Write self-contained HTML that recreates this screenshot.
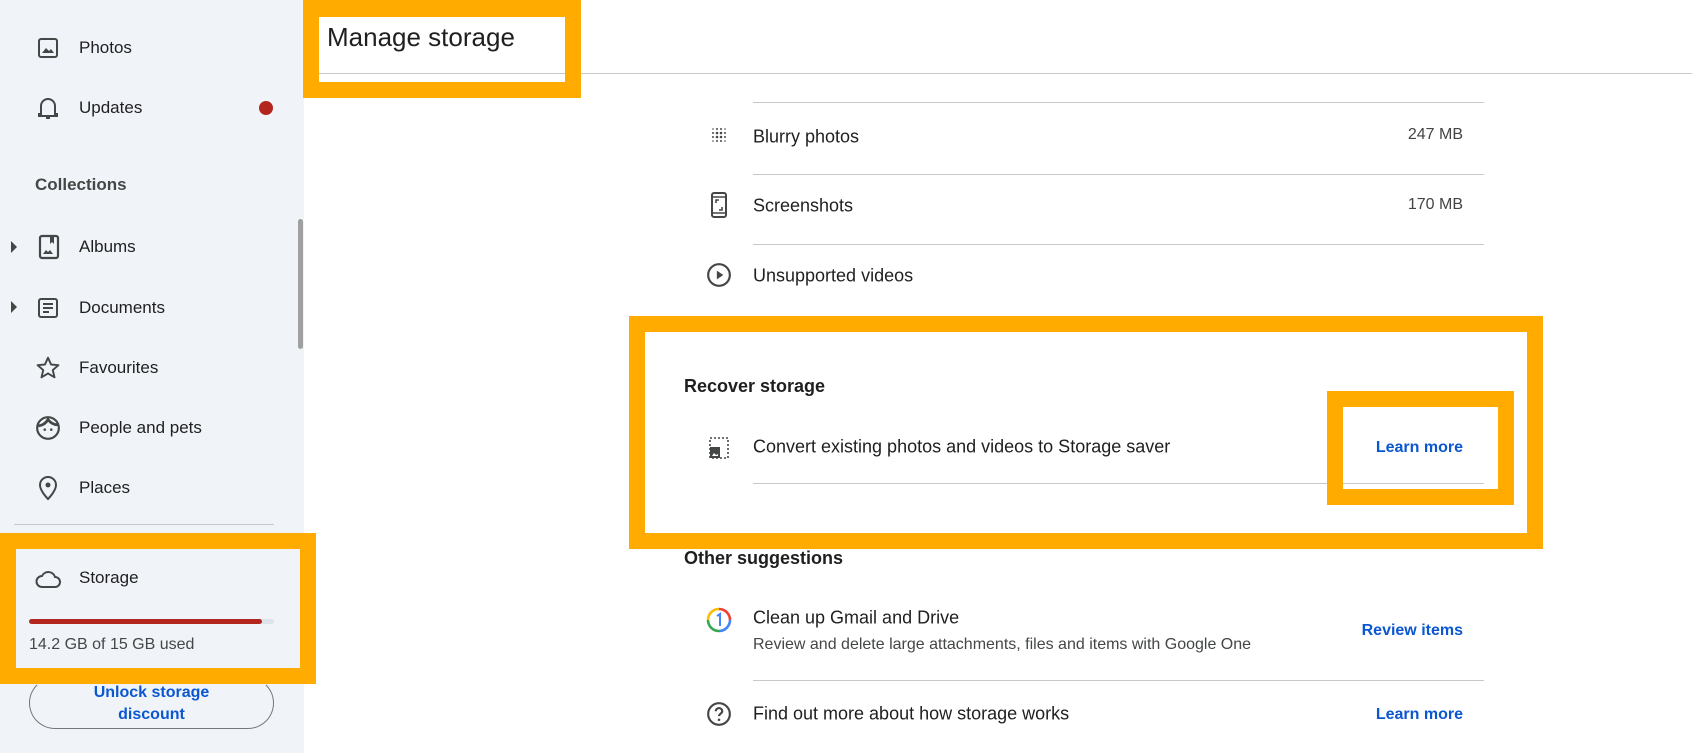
<!DOCTYPE html>
<html><head><meta charset="utf-8"><style>
*{margin:0;padding:0;box-sizing:border-box}
body{width:1692px;height:753px;overflow:hidden;background:#fff;font-family:"Liberation Sans",sans-serif;color:#1f1f1f;position:relative}
.a{position:absolute;white-space:nowrap}
.side{position:absolute;left:0;top:0;width:304px;height:753px;background:#f0f4f9}
.si{position:absolute;left:79px;font-size:17px;color:#1f1f1f;transform:translateY(-50%)}
.ic{position:absolute;transform:translate(-50%,-50%)}
.ob{position:absolute;border:16px solid #ffab00}
.line{position:absolute;height:1px;background:#c7c7c7}
.mt{position:absolute;left:753px;font-size:18px;transform:translateY(-50%)}
.rt{position:absolute;right:229px;font-size:16px;transform:translateY(-50%);color:#444}
.lk{position:absolute;right:229px;font-size:16px;font-weight:bold;color:#0b57d0;transform:translateY(-50%)}
</style></head><body>
<div class="side">
 <svg class="ic" style="left:48px;top:48px" width="24" height="24" viewBox="0 0 24 24"><rect x="3" y="3" width="18" height="18" rx="2" fill="none" stroke="#444746" stroke-width="2"/><path d="M6 17l4-5 3 3 2-2 3 4z" fill="#444746"/></svg>
 <div class="si" style="top:48px">Photos</div>
 <svg class="ic" style="left:48px;top:108px" width="24" height="26" viewBox="0 0 24 26"><path d="M5 19V11a7 7 0 0114 0v8h2v2H3v-2z" fill="none" stroke="#444746" stroke-width="2"/><path d="M10 23h4" stroke="#444746" stroke-width="2"/></svg>
 <div class="si" style="top:108px">Updates</div>
 <div class="a" style="left:259px;top:101px;width:14px;height:14px;border-radius:50%;background:#b3261e"></div>
 <div class="a" style="left:35px;top:175px;font-size:17px;font-weight:bold;color:#444746">Collections</div>
 <div class="a" style="left:11px;top:241px;border-left:6px solid #444746;border-top:6px solid transparent;border-bottom:6px solid transparent"></div>
 <svg class="ic" style="left:49px;top:247px" width="22" height="26" viewBox="0 0 22 26"><rect x="2" y="2" width="18" height="22" rx="2" fill="none" stroke="#444746" stroke-width="2.2"/><path d="M12 2v8l2-2 2 2V2z M5 20l3-4 2 2 2-2 3 4z" fill="#444746"/></svg>
 <div class="si" style="top:247px">Albums</div>
 <div class="a" style="left:11px;top:301px;border-left:6px solid #444746;border-top:6px solid transparent;border-bottom:6px solid transparent"></div>
 <svg class="ic" style="left:48px;top:308px" width="24" height="24" viewBox="0 0 24 24"><rect x="3" y="3" width="18" height="18" rx="2" fill="none" stroke="#444746" stroke-width="2"/><path d="M7 8h10M7 12h10M7 16h6" stroke="#444746" stroke-width="2"/></svg>
 <div class="si" style="top:308px">Documents</div>
 <svg class="ic" style="left:48px;top:368px" width="26" height="26" viewBox="0 0 24 24"><path d="M12 2.5l2.8 6.3 6.8.6-5.2 4.5 1.6 6.7L12 17l-6 3.6 1.6-6.7L2.4 9.4l6.8-.6z" fill="none" stroke="#444746" stroke-width="1.8" stroke-linejoin="round"/></svg>
 <div class="si" style="top:368px">Favourites</div>
 <svg class="ic" style="left:48px;top:428px" width="26" height="26" viewBox="0 0 24 24"><circle cx="12" cy="12" r="10" fill="none" stroke="#444746" stroke-width="2"/><path d="M3 10c3 0 7-2 9-6 2 3 5 5 9 5" fill="none" stroke="#444746" stroke-width="2.5"/><circle cx="9" cy="13.5" r="1.2" fill="#444746"/><circle cx="15" cy="13.5" r="1.2" fill="#444746"/></svg>
 <div class="si" style="top:428px">People and pets</div>
 <svg class="ic" style="left:48px;top:488px" width="22" height="26" viewBox="0 0 22 26"><path d="M11 24s-8-8-8-14a8 8 0 0116 0c0 6-8 14-8 14z" fill="none" stroke="#444746" stroke-width="2"/><circle cx="11" cy="10" r="2.5" fill="#444746"/></svg>
 <div class="si" style="top:488px">Places</div>
 <div class="line" style="left:14px;top:524px;width:260px;background:#c4c7c5"></div>
 <div class="a" style="left:298px;top:219px;width:5px;height:130px;border-radius:3px;background:#a0a0a0"></div>
</div>
<div class="ob" style="left:0;top:533px;width:316px;height:151px;background:#f0f4f9"></div>
<svg class="ic" style="left:48px;top:579px" width="26" height="20" viewBox="0 0 26 20"><path d="M7 18h13a5 5 0 000-10 7 7 0 00-13-1 5.5 5.5 0 000 11z" fill="none" stroke="#444746" stroke-width="2"/></svg>
<div class="si" style="top:578px">Storage</div>
<div class="a" style="left:29px;top:619px;width:245px;height:5px;border-radius:3px;background:#dde3ea"></div>
<div class="a" style="left:29px;top:619px;width:233px;height:5px;border-radius:3px;background:#b3261e"></div>
<div class="a" style="left:29px;top:636px;font-size:16px;color:#444746">14.2 GB of 15 GB used</div>
<div class="a" style="left:29px;top:677px;width:245px;height:52px;border:1px solid #747775;border-top-color:transparent;border-radius:26px;text-align:center;color:#0b57d0;font-size:16px;font-weight:bold;line-height:22px;padding-top:4px">Unlock storage<br>discount</div>

<div class="line" style="left:304px;top:73px;width:1388px"></div>
<div class="ob" style="left:303px;top:0;width:278px;height:98px;border-top-width:17px"></div>
<div class="a" style="left:327px;top:22px;font-size:26px;color:#1f1f1f">Manage storage</div>

<div class="line" style="left:753px;top:102px;width:731px"></div>
<svg class="ic" style="left:719px;top:135px" width="24" height="24" viewBox="0 0 24 24" fill="#444746"><g><circle cx="6" cy="6" r=".8"/><circle cx="10" cy="6" r="1"/><circle cx="14" cy="6" r="1"/><circle cx="18" cy="6" r=".8"/><circle cx="6" cy="10" r="1"/><circle cx="10" cy="10" r="1.3"/><circle cx="14" cy="10" r="1.3"/><circle cx="18" cy="10" r="1"/><circle cx="6" cy="14" r="1"/><circle cx="10" cy="14" r="1.3"/><circle cx="14" cy="14" r="1.3"/><circle cx="18" cy="14" r="1"/><circle cx="6" cy="18" r=".8"/><circle cx="10" cy="18" r="1"/><circle cx="14" cy="18" r="1"/><circle cx="18" cy="18" r=".8"/></g></svg>
<div class="mt" style="top:137px">Blurry photos</div>
<div class="rt" style="top:135px">247 MB</div>
<div class="line" style="left:753px;top:174px;width:731px"></div>
<svg class="ic" style="left:719px;top:205px" width="20" height="28" viewBox="0 0 20 28"><rect x="3" y="2" width="14" height="24" rx="2" fill="none" stroke="#444746" stroke-width="2"/><path d="M3 6h14M3 22h14M7 12V9h3M13 16v3h-3" fill="none" stroke="#444746" stroke-width="1.6"/></svg>
<div class="mt" style="top:206px">Screenshots</div>
<div class="rt" style="top:205px">170 MB</div>
<div class="line" style="left:753px;top:244px;width:731px"></div>
<svg class="ic" style="left:719px;top:275px" width="26" height="26" viewBox="0 0 24 24"><circle cx="12" cy="12" r="10" fill="none" stroke="#444746" stroke-width="2"/><path d="M10 8v8l6-4z" fill="#444746"/></svg>
<div class="mt" style="top:276px">Unsupported videos</div>

<div class="ob" style="left:629px;top:316px;width:914px;height:233px"></div>
<div class="a" style="left:684px;top:376px;font-size:18px;font-weight:bold;color:#1f1f1f">Recover storage</div>
<svg class="ic" style="left:719px;top:448px" width="24" height="26" viewBox="0 0 24 26"><rect x="3" y="3" width="18" height="20" fill="none" stroke="#444746" stroke-width="1.6" stroke-dasharray="2 2"/><rect x="3" y="12" width="10" height="11" fill="#444746"/><path d="M5 21l2-3 2 2 2-1v2z" fill="#fff"/></svg>
<div class="mt" style="top:447px">Convert existing photos and videos to Storage saver</div>
<div class="line" style="left:753px;top:483px;width:731px"></div>
<div class="ob" style="left:1327px;top:391px;width:187px;height:114px"></div>
<div class="lk" style="top:448px">Learn more</div>

<div class="a" style="left:684px;top:548px;font-size:18px;font-weight:bold;color:#1f1f1f">Other suggestions</div>
<svg class="ic" style="left:719px;top:620px" width="28" height="28" viewBox="0 0 28 28"><path d="M14 3a11 11 0 0111 11" fill="none" stroke="#ea4335" stroke-width="2.6"/><path d="M25 14a11 11 0 01-11 11" fill="none" stroke="#4285f4" stroke-width="2.6"/><path d="M14 25A11 11 0 013 14" fill="none" stroke="#34a853" stroke-width="2.6"/><path d="M3 14A11 11 0 0114 3" fill="none" stroke="#fbbc04" stroke-width="2.6"/><path d="M12 10l3-2v12" fill="none" stroke="#4285f4" stroke-width="2"/></svg>
<div class="mt" style="top:618px">Clean up Gmail and Drive</div>
<div class="a" style="left:753px;top:636px;font-size:16px;color:#444746">Review and delete large attachments, files and items with Google One</div>
<div class="lk" style="top:631px">Review items</div>
<div class="line" style="left:753px;top:680px;width:731px"></div>
<svg class="ic" style="left:719px;top:714px" width="26" height="26" viewBox="0 0 24 24"><circle cx="12" cy="12" r="10" fill="none" stroke="#444746" stroke-width="2"/><path d="M9 9.5a3 3 0 116 0c0 2-3 2.5-3 4.5" fill="none" stroke="#444746" stroke-width="2"/><circle cx="12" cy="17.3" r="1.2" fill="#444746"/></svg>
<div class="mt" style="top:714px">Find out more about how storage works</div>
<div class="lk" style="top:715px">Learn more</div>
</body></html>
